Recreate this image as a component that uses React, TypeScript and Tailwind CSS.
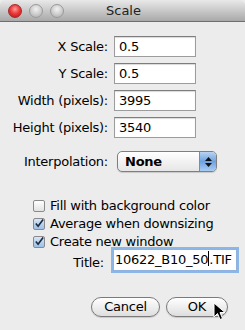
import React from 'react';

const font = { fontFamily: '"Lucida Grande", "DejaVu Sans", sans-serif' };

const Light: React.FC<{ red?: boolean }> = ({ red }) => (
  <div
    className={`w-[14px] h-[14px] rounded-full border ${
      red
        ? 'border-[#a52a2a] bg-[radial-gradient(circle_at_50%_35%,#ff9a9a_0%,#ec3b3b_45%,#b30f0f_100%)]'
        : 'border-[#9a9a9a] bg-[radial-gradient(circle_at_50%_35%,#f2f2f2_0%,#cfcfcf_50%,#a9a9a9_100%)]'
    }`}
  />
);

const Field: React.FC<{ value: string }> = ({ value }) => (
  <div className="w-[82px] h-[21px] bg-white border border-[#9c9c9c] border-t-[#7d7d7d] shadow-[inset_0_1px_1px_rgba(0,0,0,0.15)] pl-[4px] text-[13px] leading-[19px] text-black">
    {value}
  </div>
);

const Check: React.FC<{ checked?: boolean }> = ({ checked }) => (
  <div
    className={`w-[12px] h-[12px] rounded-[2px] border border-[#8a8a8a] flex items-center justify-center ${
      checked ? 'bg-gradient-to-b from-[#d6e6f7] to-[#9fc0e6]' : 'bg-gradient-to-b from-white to-[#e2e2e2]'
    }`}
  >
    {checked && (
      <svg width="11" height="11" viewBox="0 0 11 11">
        <path d="M2 5.5 L4.5 8.5 L10 1" fill="none" stroke="#1a2a40" strokeWidth="1.8" />
      </svg>
    )}
  </div>
);

const App: React.FC = () => {
  const rows: [string, string][] = [
    ['X Scale:', '0.5'],
    ['Y Scale:', '0.5'],
    ['Width (pixels):', '3995'],
    ['Height (pixels):', '3540'],
  ];

  return (
    <div style={font} className="w-[245px] h-[330px] bg-[#ececec] relative overflow-hidden text-[13px] tracking-[-0.25px] text-black">
      {/* Title bar */}
      <div className="h-[22px] rounded-t-[5px] bg-gradient-to-b from-[#e9e9e9] to-[#a9a9a9] border-b border-[#6e6e6e] flex items-center relative">
        <div className="flex items-center gap-[7px] pl-[8px]">
          <Light red />
          <Light />
          <Light />
        </div>
        <div className="absolute left-0 right-0 top-0 h-[22px] flex items-center justify-center text-[13px] tracking-normal text-[#222] pl-[2px]">
          Scale
        </div>
      </div>

      {/* Numeric fields */}
      <div className="grid grid-cols-[108px_auto] gap-x-[6px] gap-y-[6px] mt-[14px] items-center">
        {rows.map(([label, value]) => (
          <React.Fragment key={label}>
            <div className="text-right leading-[21px]">{label}</div>
            <Field value={value} />
          </React.Fragment>
        ))}
      </div>

      {/* Interpolation */}
      <div className="flex items-center mt-[13px]">
        <div className="w-[108px] text-right leading-[21px]">Interpolation:</div>
        <div className="ml-[9px] w-[100px] h-[21px] rounded-[5px] border border-[#7f7f7f] bg-gradient-to-b from-white to-[#e6e6e6] flex overflow-hidden shadow-[0_1px_1px_rgba(0,0,0,0.15)]">
          <div className="flex-1 pl-[7px] leading-[19px] font-semibold">None</div>
          <div className="w-[17px] h-full border-l border-[#6f8fb8] bg-gradient-to-b from-[#b9d3f1] via-[#6ea2df] to-[#a9cdf3] flex flex-col items-center justify-center gap-[2px]">
            <svg width="7" height="4" viewBox="0 0 7 4"><path d="M0 4 L3.5 0 L7 4 Z" fill="#111" /></svg>
            <svg width="7" height="4" viewBox="0 0 7 4"><path d="M0 0 L3.5 4 L7 0 Z" fill="#111" /></svg>
          </div>
        </div>
      </div>

      {/* Checkboxes */}
      <div className="flex flex-col pl-[33px] mt-[27px] gap-[5px]">
        {([
          ['Fill with background color', false],
          ['Average when downsizing', true],
          ['Create new window', true],
        ] as [string, boolean][]).map(([label, checked]) => (
          <div key={label} className="flex items-center gap-[5px] h-[13px]">
            <Check checked={checked} />
            <span className="leading-[13px]">{label}</span>
          </div>
        ))}
      </div>

      {/* Title field */}
      <div className="flex items-end mt-[1px]">
        <div className="w-[104px] text-right leading-[16px]">Title:</div>
        <div className="ml-[9px] w-[124px] h-[22px] bg-white border border-[#8fb3de] shadow-[0_0_0_2px_#8bb6e8] text-[13px] leading-[20px] overflow-hidden whitespace-nowrap pl-[1px] relative">
          10622_B10_50<span className="inline-block w-px h-[15px] bg-black align-[-2px]" />.TIF
        </div>
      </div>

      {/* Buttons */}
      <div className="flex justify-end gap-[6px] pr-[17px] mt-[26px]">
        <div className="w-[69px] h-[20px] rounded-full border border-[#7a7a7a] bg-gradient-to-b from-white to-[#dedede] flex items-center justify-center leading-[18px] shadow-[0_1px_1px_rgba(0,0,0,0.15)]">
          Cancel
        </div>
        <div className="w-[62px] h-[20px] rounded-full border border-[#7a7a7a] bg-gradient-to-b from-white to-[#dedede] flex items-center justify-center leading-[18px] shadow-[0_1px_1px_rgba(0,0,0,0.15)]">
          OK
        </div>
      </div>

      {/* Mouse cursor */}
      <svg className="absolute left-[213px] top-[302px]" width="13" height="19" viewBox="0 0 13 19">
        <path d="M1 1 L1 15 L4.5 11.5 L7 17.5 L9.5 16.5 L7 10.5 L12 10.5 Z" fill="#000" stroke="#fff" strokeWidth="1" />
      </svg>
    </div>
  );
};

export default App;
